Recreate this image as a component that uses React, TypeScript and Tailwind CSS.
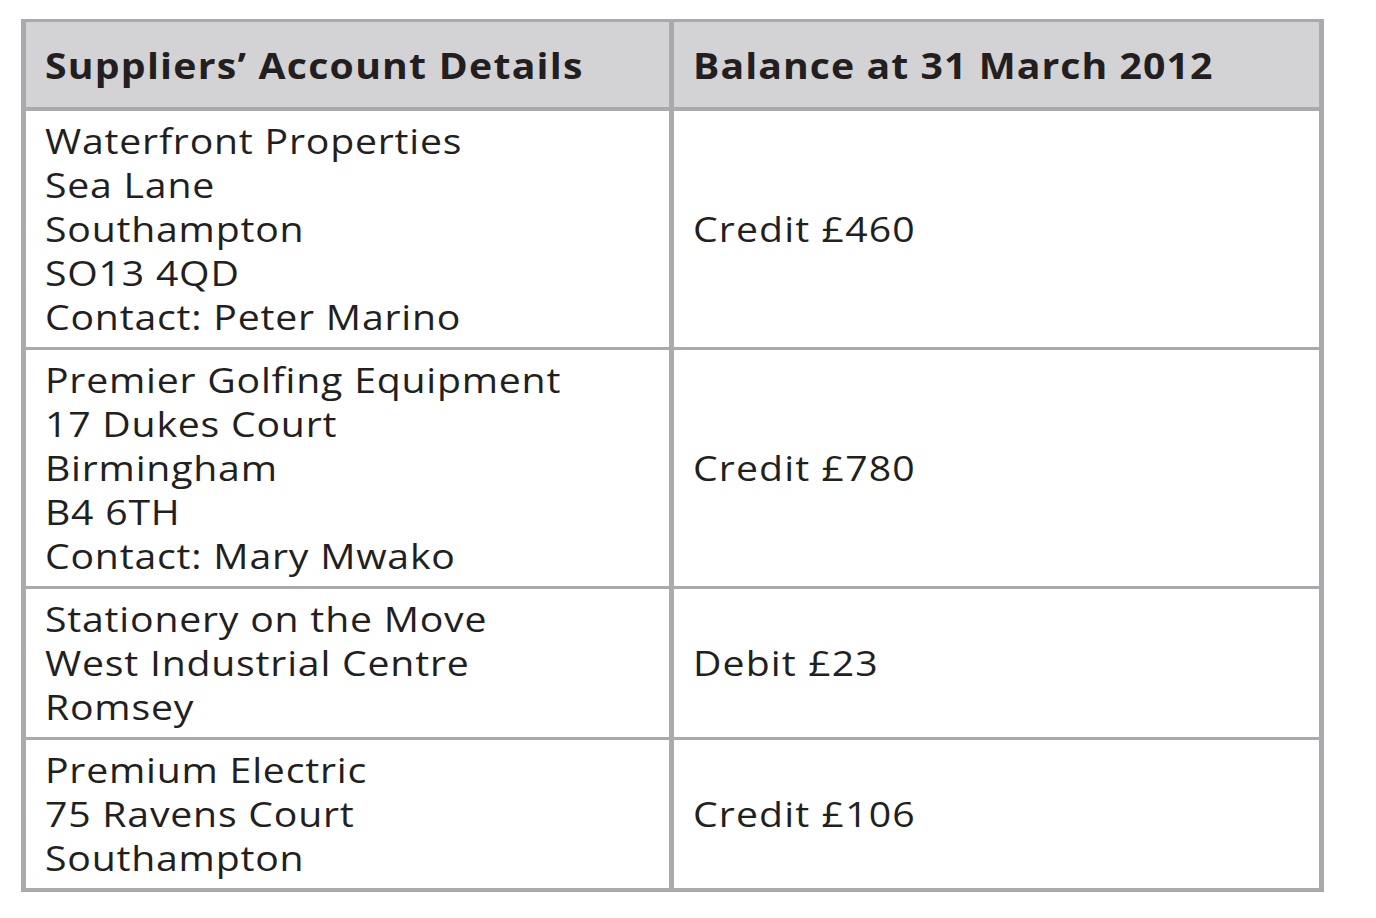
import React from "react";

const rows = [
  {
    details: ["Waterfront Properties", "Sea Lane", "Southampton", "SO13 4QD", "Contact: Peter Marino"],
    balance: "Credit £460",
  },
  {
    details: ["Premier Golfing Equipment", "17 Dukes Court", "Birmingham", "B4 6TH", "Contact: Mary Mwako"],
    balance: "Credit £780",
  },
  {
    details: ["Stationery on the Move", "West Industrial Centre", "Romsey"],
    balance: "Debit £23",
  },
  {
    details: ["Premium Electric", "75 Ravens Court", "Southampton"],
    balance: "Credit £106",
  },
];

export default function App() {
  return (
    <div className="w-[1376px] h-[918px] bg-white pt-[19px] pl-[21px] font-['Open_Sans',sans-serif] text-[#231f20]">
      <div className="w-[1303px] border-x-[5px] border-t-[3px] border-b-[4px] border-[#a9aaae]">
        <div className="grid grid-cols-[643px_1fr] bg-[#d3d3d5] border-b-[4px] border-[#a9aaae] h-[89px]">
          <div className="flex items-center pl-[19px] pt-[3px] text-[35px] font-bold">
            <span className="origin-left scale-x-[1.12] tracking-[1.1px] whitespace-nowrap">Suppliers’ Account Details</span>
          </div>
          <div className="flex items-center pl-[19px] pt-[3px] border-l-[5px] border-[#a9aaae] text-[35px] font-bold">
            <span className="origin-left scale-x-[1.12] tracking-[0.95px] whitespace-nowrap">Balance at 31 March 2012</span>
          </div>
        </div>
        {rows.map((row, i) => (
          <div
            key={i}
            className={`grid grid-cols-[643px_1fr] ${i < rows.length - 1 ? "border-b-[3px] border-[#a9aaae]" : ""}`}
          >
            <div className="pl-[19px] py-[8px] text-[35px] leading-[44px]">
              <div className="origin-left scale-x-[1.12] tracking-[0.7px] whitespace-nowrap">
                {row.details.map((d) => (
                  <div key={d}>{d}</div>
                ))}
              </div>
            </div>
            <div className="flex items-center pl-[19px] border-l-[5px] border-[#a9aaae] text-[35px]">
              <span className="origin-left scale-x-[1.12] tracking-[1px] whitespace-nowrap">{row.balance}</span>
            </div>
          </div>
        ))}
      </div>
    </div>
  );
}
